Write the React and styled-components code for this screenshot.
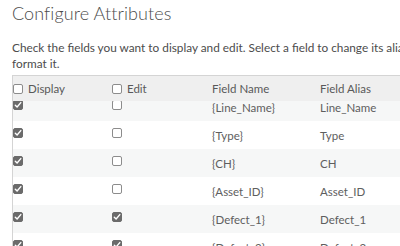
import React, { useLayoutEffect, useRef } from "react";
import styled, { createGlobalStyle } from "styled-components";

const GlobalStyle = createGlobalStyle`
  html, body {
    margin: 0;
    padding: 0;
    overflow: hidden;
    background: #fff;
  }
  body {
    font-family: Lato, "Open Sans", sans-serif;
    color: #4c4c4c;
  }
`;

const Page = styled.div`
  width: 400px;
  height: 246px;
  overflow: hidden;
  padding-left: 12px;
  box-sizing: border-box;
`;

const Title = styled.h1`
  margin: 0;
  padding-top: 2px;
  font-size: 18px;
  font-weight: 300;
  line-height: 22px;
  letter-spacing: 0.1px;
  color: #4c4c4c;
  white-space: nowrap;
`;

const Description = styled.p`
  margin: 16px 0 0;
  width: 420px;
  font-size: 11.8px;
  line-height: 16px;
  color: #4c4c4c;
`;

const Table = styled.div`
  margin-top: 3px;
  width: 460px;
  border-top: 1px solid #d4d4d4;
  border-left: 1px solid #d4d4d4;
`;

const Columns = styled.div`
  display: grid;
  grid-template-columns: 99px 100px 108px 1fr;
  align-items: center;
`;

const HeaderRow = styled(Columns)`
  height: 25px;
  background: #efefef;
  font-size: 11.5px;
  color: #595959;
`;

const Body = styled.div`
  height: 170px;
  overflow: hidden;
`;

const Row = styled(Columns)`
  height: 28px;
  background: ${(p) => (p.striped ? "#f6f7f7" : "#fff")};
  font-size: 11.5px;
  color: #5e5e5e;
`;

const Cell = styled.div`
  display: flex;
  align-items: center;
  gap: 5px;
  padding-bottom: ${(p) => (p.raise ? "5px" : "0")};
`;

const Box = styled.span`
  width: 10px;
  height: 10px;
  box-sizing: border-box;
  border-radius: 2px;
  border: 1px solid ${(p) => (p.checked ? "#6b6b6b" : "#8c8c8c")};
  background: ${(p) => (p.checked ? "#6b6b6b" : "#fff")};
  display: inline-flex;
  align-items: center;
  justify-content: center;
  flex-shrink: 0;
`;

const Check = ({ checked }) => (
  <Box checked={checked}>
    {checked && (
      <svg width="8" height="8" viewBox="0 0 8 8">
        <path
          d="M1.3 4.2 L3.1 6 L6.8 1.6"
          fill="none"
          stroke="#fff"
          strokeWidth="1.4"
          strokeLinecap="round"
          strokeLinejoin="round"
        />
      </svg>
    )}
  </Box>
);

const fields = [
  { name: "Line_Name", display: true, edit: false },
  { name: "Type", display: true, edit: false },
  { name: "CH", display: true, edit: false },
  { name: "Asset_ID", display: true, edit: false },
  { name: "Defect_1", display: true, edit: true },
  { name: "Defect_2", display: true, edit: true },
  { name: "Defect_3", display: true, edit: true },
  { name: "Comments", display: true, edit: true },
];

export default function App() {
  const bodyRef = useRef(null);

  useLayoutEffect(() => {
    if (bodyRef.current) bodyRef.current.scrollTop = 8;
  }, []);

  return (
    <Page>
      <GlobalStyle />
      <Title>Configure Attributes</Title>
      <Description>
        Check the fields you want to display and edit. Select a field to
        change its alias and format it.
      </Description>
      <Table>
        <HeaderRow>
          <Cell>
            <Check />
            <span>Display</span>
          </Cell>
          <Cell>
            <Check />
            <span>Edit</span>
          </Cell>
          <Cell>Field Name</Cell>
          <Cell>Field Alias</Cell>
        </HeaderRow>
        <Body ref={bodyRef}>
          {fields.map((f, i) => (
            <Row key={f.name} striped={i % 2 === 0}>
              <Cell raise>
                <Check checked={f.display} />
              </Cell>
              <Cell raise>
                <Check checked={f.edit} />
              </Cell>
              <Cell>{`{${f.name}}`}</Cell>
              <Cell>{f.name}</Cell>
            </Row>
          ))}
        </Body>
      </Table>
    </Page>
  );
}
